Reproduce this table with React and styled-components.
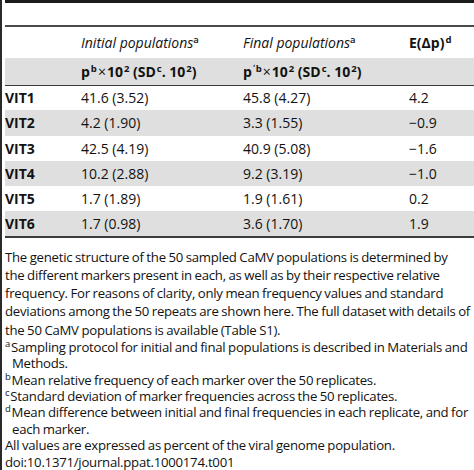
import React from "react";
import styled, { createGlobalStyle } from "styled-components";

const rows = [
  { id: "VIT1", initial: "41.6 (3.52)", final: "45.8 (4.27)", diff: "4.2" },
  { id: "VIT2", initial: "4.2 (1.90)", final: "3.3 (1.55)", diff: "\u22120.9" },
  { id: "VIT3", initial: "42.5 (4.19)", final: "40.9 (5.08)", diff: "\u22121.6" },
  { id: "VIT4", initial: "10.2 (2.88)", final: "9.2 (3.19)", diff: "\u22121.0" },
  { id: "VIT5", initial: "1.7 (1.89)", final: "1.9 (1.61)", diff: "0.2" },
  { id: "VIT6", initial: "1.7 (0.98)", final: "3.6 (1.70)", diff: "1.9" },
];

function App() {
  return (
    <>
      <GlobalStyle />
      <Frame>
        <TopBar />
        <Table>
          <colgroup>
            <col style={{ width: 76 }} />
            <col style={{ width: 162 }} />
            <col style={{ width: 166 }} />
            <col />
          </colgroup>
          <thead>
            <TitleRow>
              <HeadCell />
              <HeadCell>
                <em>Initial populations</em>
                <Sup>a</Sup>
              </HeadCell>
              <HeadCell>
                <em>Final populations</em>
                <Sup>a</Sup>
              </HeadCell>
              <HeadCell bold>
                E(Δp)<Sup bold>d</Sup>
              </HeadCell>
            </TitleRow>
            <UnitRow>
              <HeadCell />
              <HeadCell bold>
                p<Sup bold>b</Sup>
                <Times>×</Times>10<Sup bold>2</Sup> (SD<Sup bold>c</Sup>. 10
                <Sup bold>2</Sup>)
              </HeadCell>
              <HeadCell bold>
                p<Sup bold>ʹb</Sup>
                <Times>×</Times>10<Sup bold>2</Sup> (SD<Sup bold>c</Sup>. 10
                <Sup bold>2</Sup>)
              </HeadCell>
              <HeadCell />
            </UnitRow>
          </thead>
          <tbody>
            {rows.map((r, i) => (
              <BodyRow key={r.id} shaded={i % 2 === 1}>
                <LabelCell>{r.id}</LabelCell>
                <Cell>{r.initial}</Cell>
                <Cell>{r.final}</Cell>
                <Cell>{r.diff}</Cell>
              </BodyRow>
            ))}
          </tbody>
        </Table>
        <Caption>
          The genetic structure of the 50 sampled CaMV populations is determined by
          <br />
          the different markers present in each, as well as by their respective relative
          <br />
          frequency. For reasons of clarity, only mean frequency values and standard
          <br />
          deviations among the 50 repeats are shown here. The full dataset with details of
          <br />
          the 50 CaMV populations is available (Table S1).
        </Caption>
        <Notes>
          <Note>
            <NoteMark>a</NoteMark>Sampling protocol for initial and final populations is
            described in Materials and
            <br />
            Methods.
          </Note>
          <Note>
            <NoteMark>b</NoteMark>Mean relative frequency of each marker over the 50
            replicates.
          </Note>
          <Note>
            <NoteMark>c</NoteMark>Standard deviation of marker frequencies across the 50
            replicates.
          </Note>
          <Note>
            <NoteMark>d</NoteMark>Mean difference between initial and final frequencies in
            each replicate, and for
            <br />
            each marker.
          </Note>
          <Plain>All values are expressed as percent of the viral genome population.</Plain>
          <Plain>doi:10.1371/journal.ppat.1000174.t001</Plain>
        </Notes>
      </Frame>
    </>
  );
}

export default App;

const GlobalStyle = createGlobalStyle`
  html, body {
    margin: 0;
    background: #fff;
  }
  body {
    font-family: "Open Sans", "DejaVu Sans", sans-serif;
    color: #121212;
  }
`;

const Frame = styled.div`
  width: 469px;
  height: 470px;
  overflow: hidden;
  border-left: 2px solid #2a2a2a;
  padding-left: 3px;
`;

const TopBar = styled.div`
  height: 3px;
  background: #1c1c1c;
  margin-bottom: 22px;
`;

const Table = styled.table`
  width: 100%;
  border-collapse: collapse;
  table-layout: fixed;
  border-top: 2px solid #4a4a4a;
  border-bottom: 2px solid #3c3c3c;
  font-size: 14px;
`;

const TitleRow = styled.tr`
  height: 32px;
`;

const UnitRow = styled.tr`
  height: 27px;
  background: #dfdfdf;
  border-bottom: 1px solid #3a3a3a;
`;

const HeadCell = styled.th`
  padding: 0;
  text-align: left;
  font-weight: ${(p) => (p.bold ? 700 : 400)};
  white-space: nowrap;
  vertical-align: middle;
`;

const Sup = styled.sup`
  font-size: 9.5px;
  font-weight: ${(p) => (p.bold ? 700 : 600)};
  line-height: 0;
  vertical-align: 5px;
  margin-left: ${(p) => (p.bold ? "1px" : "0")};
`;

const Times = styled.span`
  font-weight: 400;
  margin: 0 1px;
`;

const BodyRow = styled.tr`
  height: 25.3px;
  background: ${(p) => (p.shaded ? "#dfdfdf" : "#fff")};
`;

const Cell = styled.td`
  padding: 0;
  white-space: nowrap;
`;

const LabelCell = styled(Cell)`
  font-weight: 700;
`;

const Caption = styled.p`
  margin: 10px 0 0;
  font-size: 13.2px;
  letter-spacing: -0.25px;
  word-spacing: -0.5px;
  line-height: 18.2px;
  white-space: nowrap;
`;

const Notes = styled.div`
  font-size: 13.2px;
  letter-spacing: -0.25px;
  word-spacing: -0.5px;
  line-height: 16.4px;
  white-space: nowrap;
`;

const Note = styled.div`
  padding-left: 7px;
  text-indent: -7px;
`;

const NoteMark = styled.sup`
  font-size: 9.5px;
  line-height: 0;
  vertical-align: 5px;
  margin-right: 1px;
`;

const Plain = styled.div``;
